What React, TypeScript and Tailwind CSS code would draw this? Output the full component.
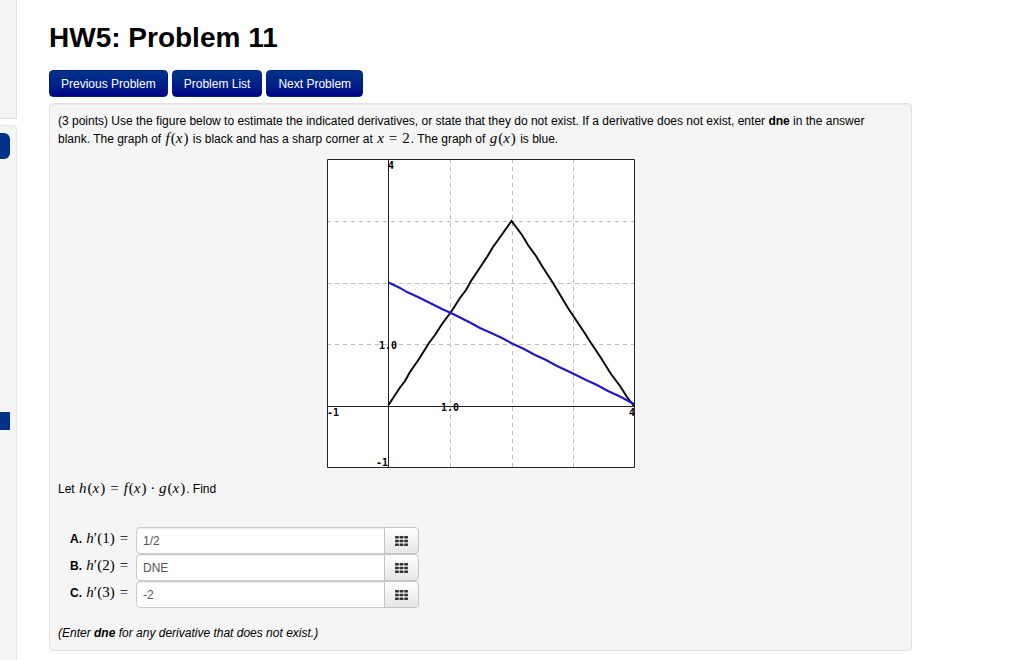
import type { ReactNode } from "react";

const navButtons = ["Previous Problem", "Problem List", "Next Problem"];

const answers = [
  { letter: "A", point: "1", value: "1/2" },
  { letter: "B", point: "2", value: "DNE" },
  { letter: "C", point: "3", value: "-2" },
];

function MathText({ children }: { children: ReactNode }) {
  return (
    <span className="mx-px font-['Liberation_Serif',serif] text-[15px] leading-none whitespace-nowrap">
      {children}
    </span>
  );
}

function Op({ children }: { children: ReactNode }) {
  return <span className="mx-[5px]">{children}</span>;
}

function Fn({ name }: { name: string }) {
  return (
    <>
      <i className="pr-px">{name}</i>(<i className="pr-px">x</i>)
    </>
  );
}

function Graph() {
  return (
    <svg
      viewBox="0 0 307 309"
      className="block h-[309px] w-[307px] overflow-visible"
      role="img"
      aria-label="Graph of f and g"
    >
      <path d="M0 0H308V309H0Z" fill="#fff" />
      <g stroke="#bdbdbd" strokeWidth="1" strokeDasharray="4 4">
        {[123.5, 185.5, 246.5].map((x) => (
          <path key={x} d={`M${x} 0V309`} />
        ))}
        {[62.5, 124.5, 185.5].map((y) => (
          <path key={y} d={`M0 ${y}H308`} />
        ))}
      </g>
      <path d="M61.5 0V309M0 247.5H308" stroke="#222" fill="none" />
      <path d="M0.5 0.5H307.5V308.5H0.5Z" stroke="#222" fill="none" />
      <path
        d="M61.5 246L73 228.5L78 222L83 213L92 200L102 184L108 176L115 165L124 153L133 139L139 131L144 122L154 107L160 98L166 88L171 81L176 74L184.5 62L195 76L201 86L209 97L215 107L226 124L232 134L241 149L249 161L257 173L264 184L274 199L284 215L293 227L300 238L307 247"
        stroke="#0a0a0a"
        strokeWidth="2"
        fill="none"
      />
      <path
        d="M61.5 123.5L73 129L80 133L92 138.5L103 144L115 150L124 154L143 163.5L153 169L162 173L175 179L185 184.5L197 190L208 196L219 201L230 207L247 215L259 221L270 226L281 232L294 238L307 245"
        stroke="#1c18c8"
        strokeWidth="2"
        fill="none"
      />
      <g fill="#000" className="font-['DejaVu_Sans_Mono',monospace] text-[10px] font-bold">
        <text x="61" y="10">4</text>
        <text x="52" y="190">1.0</text>
        <text x="114" y="252">1.0</text>
        <text x="0" y="257">-1</text>
        <text x="302" y="257">4</text>
        <text x="49" y="307">-1</text>
      </g>
    </svg>
  );
}

function GridIcon() {
  return (
    <svg viewBox="0 0 13 10" className="h-[10px] w-[13px]" fill="#333" aria-hidden="true">
      {[0, 3.7, 7.4].map((y) =>
        [0, 4.6, 9.2].map((x) => (
          <rect key={`${x}-${y}`} x={x} y={y} width="3.8" height="2.6" rx="0.5" />
        )),
      )}
    </svg>
  );
}

export default function App() {
  return (
    <div className="flex min-h-screen bg-white font-['Liberation_Sans',Arial,sans-serif] text-[12px] leading-[18px] text-black">
      <aside className="flex w-[17px] shrink-0 flex-col gap-1.5 overflow-hidden">
        <div className="h-[119px] border-r border-b border-[#e0e0e0] bg-[#f5f5f5]" />
        <div className="flex-1 rounded-tr border-t border-r border-[#e6e6e6] bg-[#f5f5f5] pt-[7px]">
          <div className="h-[26px] w-[10px] rounded-r-md bg-[#003388]" />
          <div className="mt-[253px] h-[18px] w-[10px] bg-[#003388]" />
        </div>
      </aside>

      <main className="min-w-0 flex-1 pt-[18px] pr-28 pb-[9px] pl-8">
        <h1 className="text-[28px] leading-10 font-bold">HW5: Problem 11</h1>

        <nav className="mt-3 flex gap-1">
          {navButtons.map((label) => (
            <button
              key={label}
              type="button"
              className="h-[27px] rounded border border-[#00237a] bg-linear-to-b from-[#003388] to-[#000088] px-[11px] text-white"
            >
              {label}
            </button>
          ))}
        </nav>

        <section className="mt-1.5 rounded-sm border border-[#e3e3e3] bg-[#f5f5f5] px-2 pt-2 pb-2 shadow-[inset_0_1px_1px_rgba(0,0,0,0.05)]">
          <p className="pr-3">
            (3 points) Use the figure below to estimate the indicated derivatives, or state that they
            do not exist. If a derivative does not exist, enter <b>dne</b> in the answer blank. The
            graph of <MathText><Fn name="f" /></MathText> is black and has a sharp corner at{" "}
            <MathText><i>x</i><Op>=</Op>2</MathText>. The graph of{" "}
            <MathText><Fn name="g" /></MathText> is blue.
          </p>

          <div className="mt-[11px] flex justify-center">
            <Graph />
          </div>

          <p className="mt-3">
            Let{" "}
            <MathText>
              <Fn name="h" />
              <Op>=</Op>
              <Fn name="f" /> · <Fn name="g" />
            </MathText>
            . Find
          </p>

          <div className="mt-[29px] flex flex-col pl-3">
            {answers.map(({ letter, point, value }) => (
              <div key={letter} className="flex">
                <label htmlFor={`answer-${letter}`} className="w-[66px] pt-[3px] whitespace-nowrap">
                  <b>{letter}.</b>{" "}
                  <MathText>
                    <i>h</i>′({point})<Op>=</Op>
                  </MathText>
                </label>
                <input
                  id={`answer-${letter}`}
                  type="text"
                  defaultValue={value}
                  className="h-[27px] w-[249px] rounded-l border border-[#ccc] bg-white px-1.5 text-[#555] shadow-[inset_0_1px_1px_rgba(0,0,0,0.075)]"
                />
                <button
                  type="button"
                  aria-label={`Open equation editor for ${letter}`}
                  className="-ml-px flex h-[27px] w-[35px] items-center justify-center rounded-r border border-[#c4c4c4] bg-linear-to-b from-white to-[#e6e6e6]"
                >
                  <GridIcon />
                </button>
              </div>
            ))}
          </div>

          <p className="mt-4 italic">
            (Enter <b>dne</b> for any derivative that does not exist.)
          </p>
        </section>
      </main>
    </div>
  );
}
